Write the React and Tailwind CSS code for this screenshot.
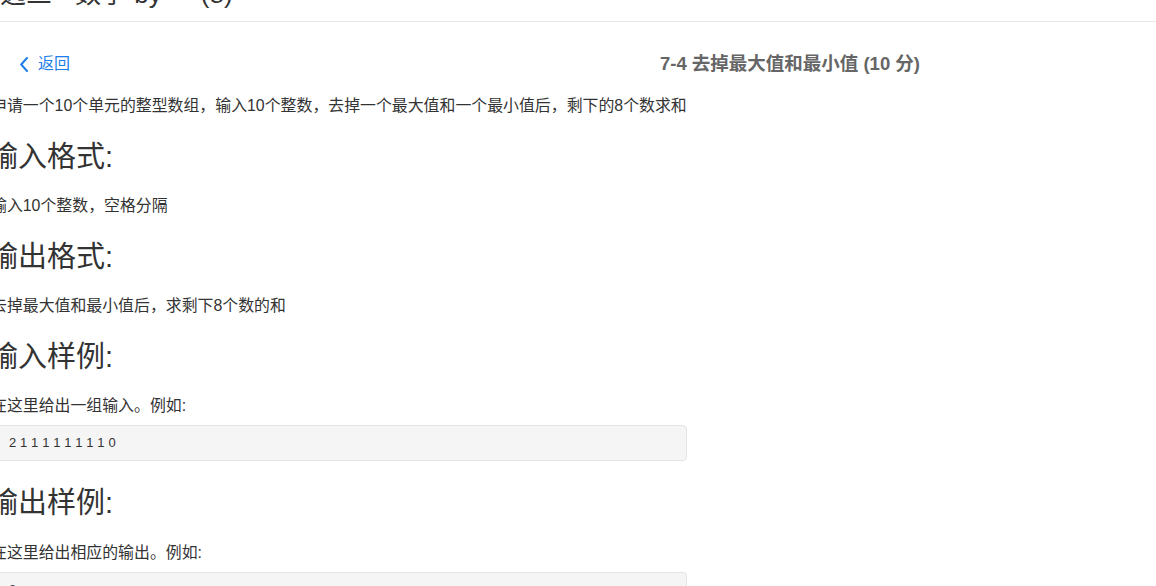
import React from 'react';

const sans = { fontFamily: '"Liberation Sans", "Noto Sans CJK SC", sans-serif' };

const Sample = ({ children }) => (
  <pre className="mt-[7px] rounded-[4px] border border-[#e3e3e3] bg-[#f5f5f5] pl-[17px] py-[9px] text-[13px] leading-[16px] tracking-[0.1px] text-[#333]" style={sans}>
    {children}
  </pre>
);

const Heading = ({ children, className = '' }) => (
  <h3 className={`text-[29px] leading-[36px] font-normal text-[#333] ${className}`}>{children}</h3>
);

export default function App() {
  return (
    <div className="min-h-screen bg-white" style={sans}>
      <div className="h-[22px] overflow-hidden border-b border-[#e6e6e6]">
        <div className="-mt-[22px] text-[26px] leading-[32px] text-[#333] whitespace-nowrap">
          选三 · 数学 by · · (8)
        </div>
      </div>

      <div className="flex items-center h-[40px] mt-[22px]">
        <a href="#" className="flex items-center gap-[10px] ml-[20px] text-[16px] text-[#1e7ee8]">
          <svg width="8" height="15" viewBox="0 0 8 15" fill="none">
            <path d="M7 1 L1.2 7.5 L7 14" stroke="#1e7ee8" strokeWidth="2" strokeLinecap="round" strokeLinejoin="round" />
          </svg>
          <span>返回</span>
        </a>
        <h2 className="ml-auto mr-[236px] text-[18.5px] font-bold text-[#666]">
          7-4 去掉最大值和最小值 (10 分)
        </h2>
      </div>

      <div className="w-[696px] -ml-[9px] mt-[10px] text-[15.9px] text-[#333]">
        <p className="leading-[24px] whitespace-nowrap">申请一个10个单元的整型数组，输入10个整数，去掉一个最大值和一个最小值后，剩下的8个数求和</p>

        <Heading className="mt-[21px] -ml-[2px]">输入格式:</Heading>
        <p className="mt-[19px] leading-[24px]">输入10个整数，空格分隔</p>

        <Heading className="mt-[21px] -ml-[2px]">输出格式:</Heading>
        <p className="mt-[19px] leading-[24px]">去掉最大值和最小值后，求剩下8个数的和</p>

        <Heading className="mt-[21px] -ml-[2px]">输入样例:</Heading>
        <p className="mt-[19px] leading-[24px]">在这里给出一组输入。例如:</p>
        <Sample>2 1 1 1 1 1 1 1 1 0</Sample>

        <Heading className="mt-[24px] -ml-[2px]">输出样例:</Heading>
        <p className="mt-[20px] leading-[24px]">在这里给出相应的输出。例如:</p>
        <Sample>8</Sample>
      </div>
    </div>
  );
}
